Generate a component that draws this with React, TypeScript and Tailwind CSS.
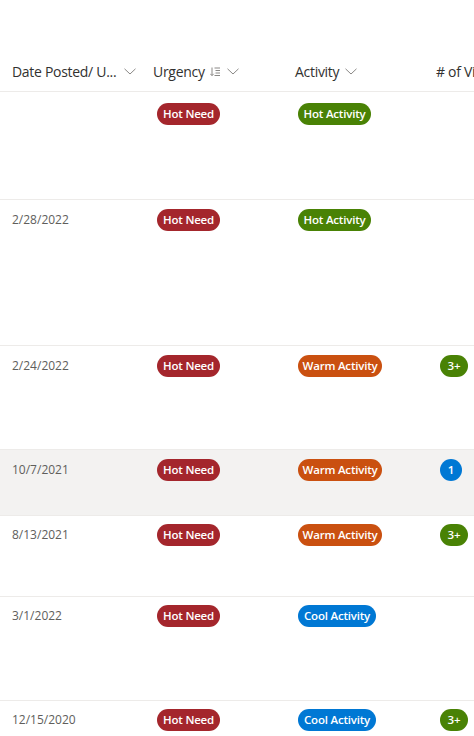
import React from "react";

type Row = {
  date: string;
  activity: "Hot" | "Warm" | "Cool";
  views?: string;
  h: string;
  pt: string;
  hl?: boolean;
};

const rows: Row[] = [
  { date: "", activity: "Hot", h: "h-[108px]", pt: "pt-[11px]" },
  { date: "2/28/2022", activity: "Hot", h: "h-[146px]", pt: "pt-[9px]" },
  { date: "2/24/2022", activity: "Warm", views: "3+", h: "h-[104px]", pt: "pt-[9px]" },
  { date: "10/7/2021", activity: "Warm", views: "1", h: "h-[66px]", pt: "pt-[9px]", hl: true },
  { date: "8/13/2021", activity: "Warm", views: "3+", h: "h-[81px]", pt: "pt-[8px]" },
  { date: "3/1/2022", activity: "Cool", h: "h-[104px]", pt: "pt-[8px]" },
  { date: "12/15/2020", activity: "Cool", views: "3+", h: "h-[60px]", pt: "pt-[8px]" },
];

const Chevron = () => (
  <svg width="12" height="7" viewBox="0 0 12 7" className="shrink-0">
    <path d="M0.5 0.8 L6 6 L11.5 0.8" fill="none" stroke="#8a8886" strokeWidth="1" />
  </svg>
);

const SortIcon = () => (
  <svg width="10" height="10" viewBox="0 0 10 10" className="shrink-0">
    <path d="M2 0.5 V8.5 M0.3 6.8 L2 8.6 L3.7 6.8" fill="none" stroke="#8a8886" strokeWidth="1" />
    <path d="M4.5 1 H10 M5.5 3.5 H10 M5.5 6 H10 M4.5 8.5 H10" fill="none" stroke="#8a8886" strokeWidth="1" />
  </svg>
);

const Pill = ({ text, color, w }: { text: string; color: string; w: string }) => (
  <div
    className={`${color} ${w} h-[22px] rounded-full text-white text-[11.5px] tracking-[-0.2px] font-semibold flex items-center justify-center whitespace-nowrap leading-none`}
  >
    {text}
  </div>
);

const activityPill = (a: Row["activity"]) => {
  if (a === "Hot") return <Pill text="Hot Activity" color="bg-[#498205]" w="w-[73px]" />;
  if (a === "Warm") return <Pill text="Warm Activity" color="bg-[#ca5010]" w="w-[84px]" />;
  return <Pill text="Cool Activity" color="bg-[#0078d4]" w="w-[78px]" />;
};

const Views = ({ v }: { v?: string }) => {
  if (!v) return null;
  if (v === "1")
    return (
      <div className="w-[22px] h-[22px] rounded-full bg-[#0078d4] text-white text-[11.5px] font-semibold flex items-center justify-center leading-none">
        1
      </div>
    );
  return (
    <div className="w-[28px] h-[22px] rounded-full bg-[#498205] text-white text-[11.5px] font-semibold flex items-center justify-center leading-none">
      {v}
    </div>
  );
};

export default function App() {
  return (
    <div
      className="w-[474px] h-[736px] overflow-hidden bg-white"
      style={{ fontFamily: '"Open Sans", "Noto Sans", sans-serif' }}
    >
      <div className="h-[52px]" />
      <div className="grid grid-cols-[141px_142px_141px_1fr] h-[40px] border-b border-[#edebe9] text-[14px] tracking-[-0.3px] text-[#323130] items-center">
        <div className="pl-3 flex items-center">
          <span className="whitespace-nowrap">Date Posted/ U...</span>
          <span className="ml-[8px]">
            <Chevron />
          </span>
        </div>
        <div className="pl-3 flex items-center">
          <span className="w-[56px] whitespace-nowrap">Urgency</span>
          <span className="ml-[1px]">
            <SortIcon />
          </span>
          <span className="ml-[7px]">
            <Chevron />
          </span>
        </div>
        <div className="pl-3 flex items-center">
          <span className="w-[48px] whitespace-nowrap">Activity</span>
          <span className="ml-[2px]">
            <Chevron />
          </span>
        </div>
        <div className="pl-3 whitespace-nowrap"># of Vi</div>
      </div>
      {rows.map((r, i) => (
        <div
          key={i}
          className={`grid grid-cols-[141px_142px_141px_1fr] ${r.h} ${r.pt} border-b border-[#edebe9] ${
            r.hl ? "bg-[#f3f2f1]" : "bg-white"
          }`}
        >
          <div className="pl-3 h-[22px] flex items-center text-[12px] text-[#605e5c]">{r.date}</div>
          <div className="pl-4">
            <Pill text="Hot Need" color="bg-[#a4262c]" w="w-[63px]" />
          </div>
          <div className="pl-[15px]">{activityPill(r.activity)}</div>
          <div className="pl-4">
            <Views v={r.views} />
          </div>
        </div>
      ))}
    </div>
  );
}
